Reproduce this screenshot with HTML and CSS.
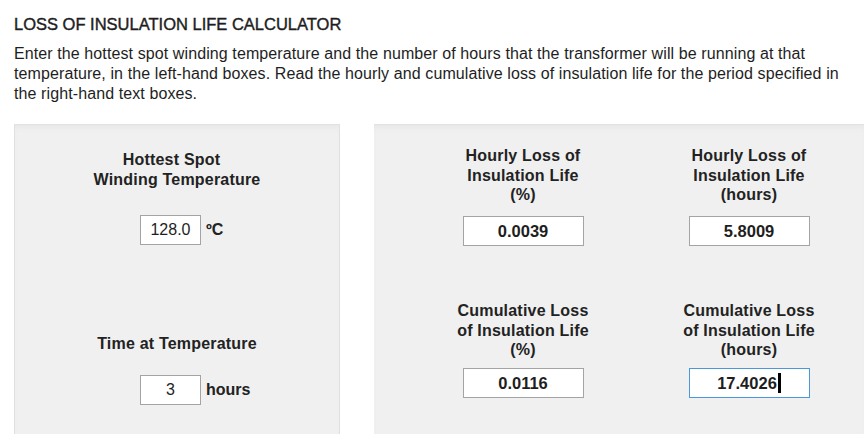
FILE: index.html
```html
<!DOCTYPE html>
<html lang="en">
<head>
  <meta charset="UTF-8">
  <title>Loss of Insulation Life Calculator</title>
  <link rel="stylesheet" href="styles.css">
</head>
<body>
  <div class="page">
    <h1>LOSS OF INSULATION LIFE CALCULATOR</h1>
    <p class="intro">Enter the hottest spot winding temperature and the number of hours that the transformer will be running at that<br>temperature, in the left-hand boxes. Read the hourly and cumulative loss of insulation life for the period specified in<br>the right-hand text boxes.</p>

    <div class="panels">
      <div class="panel inputs">
        <div class="field first">
          <label class="label"><span class="nudge">Hottest Spot</span><br>Winding Temperature</label>
          <div class="entry">
            <input type="text" class="box small" value="128.0">
            <span class="unit">&ordm;C</span>
          </div>
        </div>
        <div class="field second">
          <label class="label">Time at Temperature</label>
          <div class="entry">
            <input type="text" class="box small" value="3">
            <span class="unit">hours</span>
          </div>
        </div>
      </div>

      <div class="panel results">
        <div class="result top">
          <div class="label">Hourly Loss of<br>Insulation Life<br>(%)</div>
          <div class="box wide">0.0039</div>
        </div>
        <div class="result top">
          <div class="label">Hourly Loss of<br>Insulation Life<br>(hours)</div>
          <div class="box wide">5.8009</div>
        </div>
        <div class="result bottom">
          <div class="label">Cumulative Loss<br>of Insulation Life<br>(%)</div>
          <div class="box wide">0.0116</div>
        </div>
        <div class="result bottom">
          <div class="label">Cumulative Loss<br>of Insulation Life<br>(hours)</div>
          <div class="box wide focused">17.4026<span class="caret"></span></div>
        </div>
      </div>
    </div>
  </div>
</body>
</html>
```

FILE: styles.css
```css
body {
  margin: 0;
  background: #ffffff;
  font-family: "Liberation Sans", Arial, sans-serif;
  color: #1e1e1e;
  overflow: hidden;
}
.page {
  padding: 14px 0 0 14px;
}
h1 {
  margin: 0;
  font-size: 16.5px;
  font-weight: normal;
  -webkit-text-stroke: 0.4px #1e1e1e;
  line-height: 20px;
  white-space: nowrap;
}
.intro {
  margin: 10px 0 0;
  font-size: 16px;
  letter-spacing: 0.1px;
  line-height: 20px;
  white-space: nowrap;
}
.panels {
  display: flex;
  gap: 34px;
  margin-top: 20px;
  height: 310px;
}
.panel {
  background: #f0f0f0;
  border-top: 1px solid #e2e2e2;
  box-shadow: inset 0 6px 6px -4px #e6e6e6;
}
.inputs {
  width: 324px;
  border-left: 1px solid #e0e0e0;
  border-right: 1px solid #e0e0e0;
  display: flex;
  flex-direction: column;
}
.label {
  display: block;
  font-size: 16px;
  font-weight: bold;
  letter-spacing: 0.2px;
  line-height: 20px;
  text-align: center;
  color: #222;
}
.nudge {
  padding-right: 11px;
}
.field {
  display: flex;
  flex-direction: column;
}
.field.first {
  margin-top: 25px;
}
.field.first .entry {
  margin-top: 25px;
}
.field.second {
  margin-top: 89px;
}
.field.second .entry {
  margin-top: 21px;
}
.entry {
  display: flex;
  align-items: center;
  margin-left: 125px;
}
.unit {
  font-size: 16px;
  font-weight: bold;
  margin-left: 5px;
  color: #222;
}
.box {
  box-sizing: border-box;
  height: 30px;
  border: 1px solid #a4a4a4;
  background: #fff;
  text-align: center;
  font-family: "Liberation Sans", Arial, sans-serif;
  color: #1e1e1e;
  padding: 0;
  outline: none;
}
.small {
  width: 61px;
  font-size: 16px;
}
.wide {
  width: 121px;
  font-size: 16.5px;
  font-weight: bold;
  line-height: 28px;
}
.focused {
  border-color: #4a98da;
}
.caret {
  display: inline-block;
  width: 3px;
  height: 20px;
  margin-left: 1px;
  background: #000;
  vertical-align: -4px;
}
.results {
  flex: 1;
  display: grid;
  grid-template-columns: 226px 226px;
  grid-template-rows: 155px auto;
  padding: 21px 0 0 36px;
}
.result {
  display: flex;
  flex-direction: column;
  align-items: center;
}
.result .label {
  line-height: 19.5px;
}
.result.top .box {
  margin-top: 11px;
}
.result.bottom .box {
  margin-top: 8px;
}
```
